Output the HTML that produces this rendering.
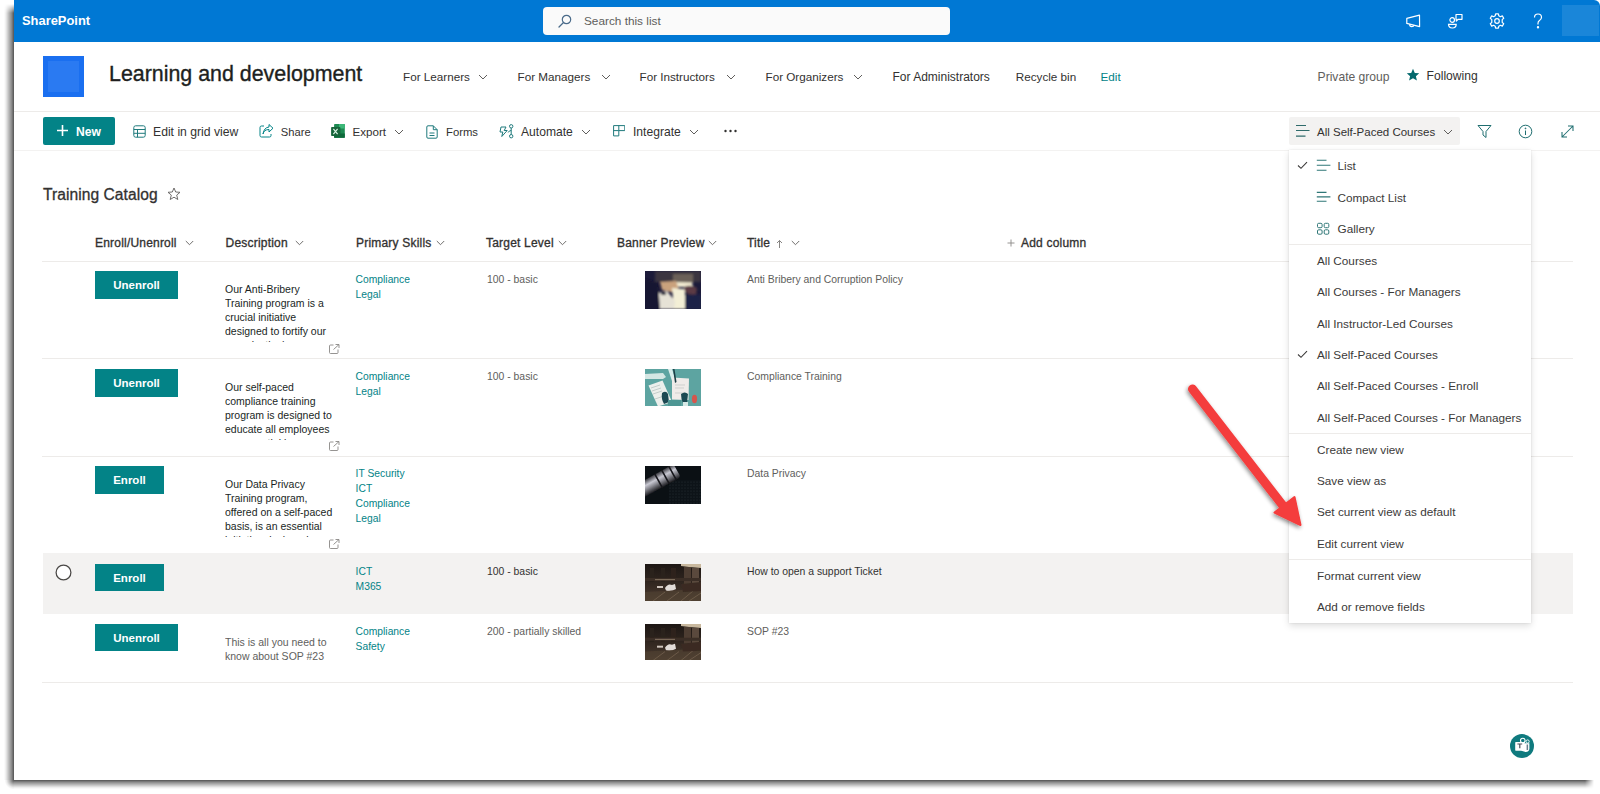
<!DOCTYPE html>
<html><head><meta charset="utf-8">
<style>
*{box-sizing:border-box;margin:0;padding:0}
html,body{width:1600px;height:794px;overflow:hidden;background:#fff;font-family:"Liberation Sans",sans-serif;color:#323130}
#page{position:absolute;left:14px;top:0;width:1586px;height:780px;background:#fff;box-shadow:none}
.a{position:absolute}
.t{position:absolute;white-space:nowrap}
#suite{position:absolute;left:14px;top:0;width:1586px;height:41.5px;background:#0078d4;border-top-right-radius:6px}
.hl{position:absolute;height:1px;background:#edebe9}
.btn{position:absolute;background:#038387;color:#fff;font-weight:700;font-size:11.5px;line-height:28px;text-align:center}
.cell{font-size:10.4px;color:#605e5c}
.sk{font-size:10.3px;color:#038387;line-height:15px}
.desc{font-size:10.5px;color:#201f1e;line-height:14px;white-space:normal;overflow:hidden}
.hd{font-size:12px;font-weight:400;color:#323130;line-height:16px;letter-spacing:0.2px;-webkit-text-stroke:0.32px #323130}
.nav{font-size:11.7px;color:#323130;line-height:16px}
.cmd{font-size:11.8px;color:#323130;line-height:16px}
.mi{font-size:11.75px;color:#3b3a39;line-height:16px}
.thumb1{background:radial-gradient(ellipse at 55% 40%,#f5ecd8 0,#c9b99a 18%,#2c2f45 45%,#15182a 100%)}
.thumb2{background:#5aa3a0}
.thumb3{background:radial-gradient(ellipse at 30% 35%,#9a9a9a 0,#555 20%,#1d2226 45%,#0c1114 100%)}
.thumb4{background:linear-gradient(180deg,#3a2c22 0,#2a2019 50%,#4a3a2c 100%)}
</style></head><body>
<div id="page"></div>
<div class="a" style="left:4px;top:4px;width:10px;height:776px;background:linear-gradient(to right,rgba(0,0,0,0) 0%,rgba(0,0,0,0.08) 20%,rgba(0,0,0,0.25) 45%,rgba(0,0,0,0.45) 75%,rgba(0,0,0,0.68) 100%);-webkit-mask-image:linear-gradient(to bottom,transparent 0,#000 9px)"></div>
<div class="a" style="left:14px;top:780px;width:1580px;height:9px;background:linear-gradient(to bottom,rgba(0,0,0,0.68) 0%,rgba(0,0,0,0.45) 25%,rgba(0,0,0,0.25) 55%,rgba(0,0,0,0.08) 80%,rgba(0,0,0,0) 100%);-webkit-mask-image:linear-gradient(to left,transparent 0,#000 9px)"></div>
<div class="a" style="left:4px;top:780px;width:10px;height:9px;background:radial-gradient(circle at 100% 0,rgba(0,0,0,0.68) 0,rgba(0,0,0,0.45) 2.5px,rgba(0,0,0,0.25) 5px,rgba(0,0,0,0.08) 7.5px,rgba(0,0,0,0) 9.5px)"></div>

<div id="suite"></div>
<div class="t" style="left:22px;top:13px;font-size:12.9px;font-weight:700;color:#fff;line-height:16px">SharePoint</div>
<div class="a" style="left:543px;top:7px;width:407px;height:28px;background:#fafafa;border-radius:4px"></div>
<svg class="a" style="left:557px;top:13px" width="16" height="16" viewBox="0 0 16 16"><circle cx="9.5" cy="6.5" r="4.2" fill="none" stroke="#4a6b8a" stroke-width="1.2"/><path d="M6.5 9.5 L2 14" stroke="#4a6b8a" stroke-width="1.3" stroke-linecap="round"/></svg>
<div class="t" style="left:584px;top:13px;font-size:11.8px;color:#605e5c;line-height:16px">Search this list</div>
<svg class="a" style="left:1404px;top:12px" width="18" height="18" viewBox="0 0 18 18" fill="none" stroke="#fff" stroke-width="1.2"><path d="M2.8 6.4 L15.5 3.2 L15.6 14.6 L2.8 11.4 Z" stroke-linejoin="round"/><path d="M5.6 12.2 Q5.6 14.6 7.8 14.6 Q9.6 14.6 10.2 13.3"/></svg>
<svg class="a" style="left:1446px;top:12px" width="18" height="18" viewBox="0 0 18 18" fill="none" stroke="#fff" stroke-width="1.2"><circle cx="6.2" cy="8" r="2.3"/><path d="M2.5 12.3 H10.2 Q10.2 16 6.35 16 Q2.5 16 2.5 12.3Z"/><path d="M10 2.5 H16 V7.3 H12.2 L10.3 9 V7.3 H10 Z" stroke-linejoin="round"/></svg>
<svg class="a" style="left:1488px;top:12px" width="18" height="18" viewBox="0 0 18 18" fill="none" stroke="#fff" stroke-width="1.2"><circle cx="9" cy="9" r="2.3"/><path d="M7.6 1.8 L10.4 1.8 L10.8 3.8 L12.4 4.7 L14.3 3.9 L15.7 6.3 L14.2 7.6 L14.2 10.4 L15.7 11.7 L14.3 14.1 L12.4 13.3 L10.8 14.2 L10.4 16.2 L7.6 16.2 L7.2 14.2 L5.6 13.3 L3.7 14.1 L2.3 11.7 L3.8 10.4 L3.8 7.6 L2.3 6.3 L3.7 3.9 L5.6 4.7 L7.2 3.8 Z" stroke-linejoin="round"/></svg>
<svg class="a" style="left:1530px;top:12px" width="16" height="18" viewBox="0 0 16 18" fill="none" stroke="#fff" stroke-width="1.2"><path d="M4.5 5.5 Q4.5 2 8 2 Q11.5 2 11.5 5.2 Q11.5 7.2 9.5 8.4 Q8 9.3 8 11.2 L8 12.5"/><circle cx="8" cy="15.3" r="0.6" fill="#fff"/></svg>
<div class="a" style="left:1562px;top:5px;width:36.5px;height:31px;background:#1a86d9"></div>


<div class="a" style="left:43px;top:56px;width:41px;height:41px;background:#1a6ff0"></div>
<div class="a" style="left:48px;top:61px;width:31px;height:31px;background:#2a7af2"></div>
<div class="t" style="left:109px;top:62px;font-size:21.4px;color:#201f1e;line-height:24px;-webkit-text-stroke:0.35px #201f1e">Learning and development</div>
<div class="t nav" style="left:403px;top:69px">For Learners</div><svg class="a" style="left:478px;top:74px" width="10" height="6" viewBox="0 0 10 6"><path d="M1 1 L5 5 L9 1" fill="none" stroke="#605e5c" stroke-width="1"/></svg>
<div class="t nav" style="left:517.5px;top:69px">For Managers</div><svg class="a" style="left:601px;top:74px" width="10" height="6" viewBox="0 0 10 6"><path d="M1 1 L5 5 L9 1" fill="none" stroke="#605e5c" stroke-width="1"/></svg>
<div class="t nav" style="left:639.5px;top:69px">For Instructors</div><svg class="a" style="left:726px;top:74px" width="10" height="6" viewBox="0 0 10 6"><path d="M1 1 L5 5 L9 1" fill="none" stroke="#605e5c" stroke-width="1"/></svg>
<div class="t nav" style="left:765.5px;top:69px">For Organizers</div><svg class="a" style="left:853px;top:74px" width="10" height="6" viewBox="0 0 10 6"><path d="M1 1 L5 5 L9 1" fill="none" stroke="#605e5c" stroke-width="1"/></svg>
<div class="t nav" style="left:892.5px;top:69px;font-size:12px">For Administrators</div>
<div class="t nav" style="left:1015.75px;top:69px">Recycle bin</div>
<div class="t nav" style="left:1100.5px;top:69px;color:#038387">Edit</div>
<div class="t nav" style="left:1317.6px;top:69px;color:#605e5c;font-size:12.1px">Private group</div>
<svg class="a" style="left:1406px;top:68px" width="14" height="14" viewBox="0 0 14 14"><path d="M7 0.8 L8.8 4.9 L13.2 5.3 L9.9 8.2 L10.9 12.6 L7 10.3 L3.1 12.6 L4.1 8.2 L0.8 5.3 L5.2 4.9 Z" fill="#03686c"/></svg>
<div class="t nav" style="left:1426.6px;top:68px;font-size:12.1px">Following</div>
<div class="hl" style="left:14px;top:111px;width:1586px"></div>
<div class="hl" style="left:14px;top:150px;width:1586px;background:#f3f2f1"></div>

<div class="a" style="left:42.5px;top:117px;width:72.5px;height:27.5px;background:#038387;border-radius:2px"></div>
<svg class="a" style="left:56px;top:124px" width="13" height="13" viewBox="0 0 13 13"><path d="M6.5 1 V12 M1 6.5 H12" stroke="#fff" stroke-width="1.6"/></svg>
<div class="t" style="left:76px;top:123.5px;font-size:12.1px;font-weight:700;color:#fff;line-height:16px">New</div>
<svg class="a" style="left:132.5px;top:124.5px" width="13" height="13" viewBox="0 0 13 13" fill="none" stroke="#1f7a7c" stroke-width="1"><rect x="0.8" y="0.8" width="11.4" height="11.4" rx="1.8"/><path d="M0.8 4.5 H12.2 M0.8 8.3 H12.2 M4.5 4.5 V12.2"/></svg>
<div class="t cmd" style="left:153px;top:123.75px;font-size:12.2px">Edit in grid view</div>
<svg class="a" style="left:259px;top:124px" width="15" height="14" viewBox="0 0 15 14" fill="none" stroke="#038387" stroke-width="1"><path d="M5 2 H2.5 Q1 2 1 3.5 V11.5 Q1 13 2.5 13 H10.5 Q12 13 12 11.5 V10"/><path d="M4 10 Q5 5.5 10 5.5 V8 L14 4.2 L10 0.5 V3 Q5 3.5 4 10Z"/></svg>
<div class="t cmd" style="left:280.75px;top:123.75px;font-size:11.2px">Share</div>
<svg class="a" style="left:330px;top:123px" width="16" height="16" viewBox="0 0 16 16"><rect x="4.1" y="1" width="10.7" height="13.8" rx="0.8" fill="#1d8a52"/><rect x="9" y="1" width="5.8" height="4.5" fill="#3cb878"/><rect x="4.1" y="10.5" width="10.7" height="4.3" fill="#0e6a3b"/><rect x="1.1" y="4" width="9.3" height="9" rx="0.8" fill="#17653b"/><path d="M3.4 5.8 L7.6 11.2 M7.6 5.8 L3.4 11.2" stroke="#d9f2e3" stroke-width="1.15"/></svg>
<div class="t cmd" style="left:352.5px;top:123.75px;font-size:11.6px">Export</div><svg class="a" style="left:394px;top:129px" width="10" height="6" viewBox="0 0 10 6"><path d="M1 1 L5 5 L9 1" fill="none" stroke="#605e5c" stroke-width="1"/></svg>
<svg class="a" style="left:425.5px;top:124.5px" width="12" height="14" viewBox="0 0 12 14" fill="none" stroke="#1f7a7c" stroke-width="1"><path d="M2 0.8 H7.3 L11.2 4.7 V12 Q11.2 13.2 10 13.2 H2 Q0.8 13.2 0.8 12 V2 Q0.8 0.8 2 0.8Z"/><path d="M7.3 0.8 V4.7 H11.2"/><path d="M3.5 8 H8.5 M3.5 10.5 H8.5"/></svg>
<div class="t cmd" style="left:446px;top:123.75px;font-size:11.3px">Forms</div>
<svg class="a" style="left:499px;top:124px" width="16" height="15" viewBox="0 0 16 15" fill="none" stroke="#1f7a7c" stroke-width="1"><path d="M7 3 L2 3 L1 8 L3.8 8 L2.8 12.5 L8.2 6.5 L5.2 6.5 Z" stroke-linejoin="round"/><circle cx="12.2" cy="2.3" r="1.7"/><circle cx="12.2" cy="12.2" r="1.7"/><path d="M12.2 4 V10.5 M12.2 6.5 Q10 6.5 9.2 8.5"/></svg>
<div class="t cmd" style="left:521px;top:123.75px;font-size:12.1px">Automate</div><svg class="a" style="left:581px;top:129px" width="10" height="6" viewBox="0 0 10 6"><path d="M1 1 L5 5 L9 1" fill="none" stroke="#605e5c" stroke-width="1"/></svg>
<svg class="a" style="left:612.5px;top:125px" width="12.5" height="11.5" viewBox="0 0 12.5 11.5" fill="none" stroke="#1f7a7c" stroke-width="1"><path d="M0.6 0.6 H11.8 V5.6 H5.8 V10.9 H0.6 Z"/><path d="M5.8 0.6 V5.6 M0.6 5.6 H5.8"/></svg>
<div class="t cmd" style="left:633px;top:123.75px;font-size:12.1px">Integrate</div><svg class="a" style="left:689px;top:129px" width="10" height="6" viewBox="0 0 10 6"><path d="M1 1 L5 5 L9 1" fill="none" stroke="#605e5c" stroke-width="1"/></svg>
<svg class="a" style="left:724px;top:129px" width="13" height="4" viewBox="0 0 13 4"><circle cx="1.5" cy="2" r="1.2" fill="#323130"/><circle cx="6.5" cy="2" r="1.2" fill="#323130"/><circle cx="11.5" cy="2" r="1.2" fill="#323130"/></svg>
<div class="a" style="left:1289px;top:117px;width:171px;height:27.5px;background:#f3f2f1;border-radius:2px"></div>
<svg class="a" style="left:1295px;top:124px" width="16" height="14" viewBox="0 0 16 14"><path d="M1 1.5 H11 M1 6.5 H14.5 M1 12.2 H10.5" stroke="#2f6b6b" stroke-width="1.2"/></svg>
<div class="t cmd" style="left:1317px;top:123.75px;font-size:11.5px">All Self-Paced Courses</div><svg class="a" style="left:1443px;top:129px" width="10" height="6" viewBox="0 0 10 6"><path d="M1 1 L5 5 L9 1" fill="none" stroke="#605e5c" stroke-width="1"/></svg>
<svg class="a" style="left:1477px;top:124px" width="15" height="15" viewBox="0 0 15 15" fill="none" stroke="#1f6e70" stroke-width="1"><path d="M1 1.5 H14 L9 7.5 V13.5 L6 11 V7.5 Z" stroke-linejoin="round"/></svg>
<svg class="a" style="left:1518px;top:124px" width="15" height="15" viewBox="0 0 15 15" fill="none" stroke="#1f6e70" stroke-width="1"><circle cx="7.5" cy="7.5" r="6.3"/><path d="M7.5 6.5 V11"/><circle cx="7.5" cy="4.4" r="0.45" fill="#1f6e70"/></svg>
<svg class="a" style="left:1560px;top:124px" width="15" height="15" viewBox="0 0 15 15" fill="none" stroke="#1f6e70" stroke-width="1.05"><path d="M2 13 L13 2 M8 2 H13 V7 M2 8 V13 H7"/></svg>

<div class="t" style="left:43px;top:185px;font-size:15.6px;color:#323130;line-height:19px;letter-spacing:0.05px;-webkit-text-stroke:0.3px #323130">Training Catalog</div>
<svg class="a" style="left:167px;top:187px" width="14" height="14" viewBox="0 0 14 14"><path d="M7 1 L8.7 5 L13 5.3 L9.7 8.1 L10.8 12.5 L7 10.2 L3.2 12.5 L4.3 8.1 L1 5.3 L5.3 5 Z" fill="none" stroke="#605e5c" stroke-width="0.9" stroke-linejoin="round"/></svg>
<div class="t hd" style="left:95px;top:235px">Enroll/Unenroll</div><svg class="a" style="left:185px;top:240px" width="9" height="6" viewBox="0 0 9 6"><path d="M0.8 1 L4.5 4.7 L8.2 1" fill="none" stroke="#605e5c" stroke-width="0.9"/></svg>
<div class="t hd" style="left:225.6px;top:235px">Description</div><svg class="a" style="left:295px;top:240px" width="9" height="6" viewBox="0 0 9 6"><path d="M0.8 1 L4.5 4.7 L8.2 1" fill="none" stroke="#605e5c" stroke-width="0.9"/></svg>
<div class="t hd" style="left:356px;top:235px">Primary Skills</div><svg class="a" style="left:436px;top:240px" width="9" height="6" viewBox="0 0 9 6"><path d="M0.8 1 L4.5 4.7 L8.2 1" fill="none" stroke="#605e5c" stroke-width="0.9"/></svg>
<div class="t hd" style="left:486px;top:235px">Target Level</div><svg class="a" style="left:558px;top:240px" width="9" height="6" viewBox="0 0 9 6"><path d="M0.8 1 L4.5 4.7 L8.2 1" fill="none" stroke="#605e5c" stroke-width="0.9"/></svg>
<div class="t hd" style="left:617px;top:235px">Banner Preview</div><svg class="a" style="left:708px;top:240px" width="9" height="6" viewBox="0 0 9 6"><path d="M0.8 1 L4.5 4.7 L8.2 1" fill="none" stroke="#605e5c" stroke-width="0.9"/></svg>
<div class="t hd" style="left:747px;top:235px">Title</div>
<svg class="a" style="left:775.8px;top:239px" width="7" height="10" viewBox="0 0 7 10"><path d="M3.5 9 V1.5 M1 4 L3.5 1.5 L6 4" fill="none" stroke="#797775" stroke-width="0.9"/></svg><svg class="a" style="left:791px;top:240px" width="9" height="6" viewBox="0 0 9 6"><path d="M0.8 1 L4.5 4.7 L8.2 1" fill="none" stroke="#605e5c" stroke-width="0.9"/></svg>
<svg class="a" style="left:1007px;top:239px" width="8" height="8" viewBox="0 0 8 8"><path d="M4 0.5 V7.5 M0.5 4 H7.5" stroke="#8a8886" stroke-width="0.9"/></svg>
<div class="t hd" style="left:1021px;top:235px">Add column</div>
<div class="hl" style="left:42px;top:261px;width:1531px"></div>
<div class="hl" style="left:42px;top:358px;width:1531px"></div>
<div class="hl" style="left:42px;top:456px;width:1531px"></div>
<div class="a" style="left:43px;top:553px;width:1530px;height:61px;background:#f3f2f1"></div>
<div class="hl" style="left:42px;top:682px;width:1531px"></div>

<div class="btn" style="left:95px;top:271px;width:83px;height:28px">Unenroll</div>
<div class="t desc" style="left:225px;top:282px;width:112px;height:60px">Our Anti-Bribery<br>Training program is a<br>crucial initiative<br>designed to fortify our<br>organization's</div>
<svg class="a" style="left:329px;top:344px" width="11" height="10" viewBox="0 0 11 10" fill="none" stroke="#8a8886" stroke-width="0.9"><path d="M4.5 1 H1.5 Q0.5 1 0.5 2 V8.5 Q0.5 9.5 1.5 9.5 H8 Q9 9.5 9 8.5 V5.5"/><path d="M4.5 5.5 L10 0.5 M6.5 0.5 H10 V4"/></svg>
<div class="t sk" style="left:355.6px;top:271.5px">Compliance<br>Legal</div>
<div class="t cell" style="left:487px;top:271.5px;line-height:15px">100 - basic</div>
<svg class="a" style="left:645px;top:271px" width="56" height="38" viewBox="0 0 56 38"><defs><filter id="b1" x="-10%" y="-10%" width="120%" height="120%"><feGaussianBlur stdDeviation="1.1"/></filter><clipPath id="c1"><rect width="56" height="38"/></clipPath></defs><g clip-path="url(#c1)"><rect width="56" height="38" fill="#1c1b3a"/><g filter="url(#b1)"><rect x="10" y="0" width="46" height="11" fill="#3b3640"/><rect x="28" y="3" width="20" height="9" fill="#6a6058"/><path d="M27 11 L47 11.5 L48 16 L28 16 Z" fill="#f1ead0"/><path d="M15 11 L31 10 L34 19 L30 22 L17 19 Z" fill="#caa27d"/><path d="M27 17 L40 18 L40 38 L29 38 Z" fill="#f3efd6"/><path d="M13 22 L22 20 L30 30 L29 38 L14 38 Z" fill="#e6e2d6"/><path d="M39 16 Q46 13 52 17 L51 24 Q45 25 40 21 Z" fill="#5b3a44"/><path d="M40 24 L56 23 V38 H40 Z" fill="#1e2046"/><path d="M0 8 L13 12 L15 38 H0 Z" fill="#141330"/><rect x="16" y="21" width="5" height="3" fill="#23223a"/></g></g></svg>
<div class="t cell" style="left:747px;top:271.5px;line-height:15px">Anti Bribery and Corruption Policy</div>

<div class="btn" style="left:95px;top:369px;width:83px;height:28px">Unenroll</div>
<div class="t desc" style="left:225px;top:379.5px;width:112px;height:60px">Our self-paced<br>compliance training<br>program is designed to<br>educate all employees<br>on essential laws</div>
<svg class="a" style="left:329px;top:441px" width="11" height="10" viewBox="0 0 11 10" fill="none" stroke="#8a8886" stroke-width="0.9"><path d="M4.5 1 H1.5 Q0.5 1 0.5 2 V8.5 Q0.5 9.5 1.5 9.5 H8 Q9 9.5 9 8.5 V5.5"/><path d="M4.5 5.5 L10 0.5 M6.5 0.5 H10 V4"/></svg>
<div class="t sk" style="left:355.6px;top:369px">Compliance<br>Legal</div>
<div class="t cell" style="left:487px;top:369px;line-height:15px">100 - basic</div>
<svg class="a" style="left:645px;top:369px" width="56" height="37" viewBox="0 0 56 37"><defs><filter id="b2"><feGaussianBlur stdDeviation="0.45"/></filter></defs><rect width="56" height="37" fill="#5da4a1"/><g filter="url(#b2)"><path d="M0 5 L18 4 L21 8 L18 10 L0 10 Z" fill="#d4e6e3"/><path d="M3.5 16.5 L17.5 11.5 L27 33 L13 37.5 Z" fill="#ecefec"/><path d="M6 19 L15 16 M7 22 L16 19 M8 25 L17 22 M10 30 L19 27" stroke="#b9c4c2" stroke-width="0.8"/><path d="M23 0 L27 0 L31 12 L27 12 Z" fill="#d8ecea"/><path d="M27 8.5 L44 9.5 L43.5 31 L27 30.5 Z" fill="#efebe9"/><path d="M30 16 H40 M30 19 H39 M30 24 H40" stroke="#c2c4c4" stroke-width="0.7"/><path d="M28 0 L29.5 0 L31.5 13 L30 14 Z" fill="#1d3e44"/><path d="M17 24 Q21 21 23 25 L24 33 L19 35 Q16 30 17 24 Z" fill="#1f4a52"/><path d="M36 25 Q40 22 43 25 L42 34 L38 34 Q36 30 36 25 Z" fill="#1f4a52"/><ellipse cx="49.5" cy="30" rx="2.6" ry="4.2" fill="#d4574e"/><rect x="23" y="31" width="13" height="6" fill="#4e9693"/><rect x="38" y="33" width="5" height="4" fill="#d7e9e6"/></g></svg>
<div class="t cell" style="left:747px;top:369px;line-height:15px">Compliance Training</div>

<div class="btn" style="left:95px;top:466px;width:69px;height:28px">Enroll</div>
<div class="t desc" style="left:225px;top:477px;width:112px;height:60px">Our Data Privacy<br>Training program,<br>offered on a self-paced<br>basis, is an essential<br>initiative designed</div>
<svg class="a" style="left:329px;top:539px" width="11" height="10" viewBox="0 0 11 10" fill="none" stroke="#8a8886" stroke-width="0.9"><path d="M4.5 1 H1.5 Q0.5 1 0.5 2 V8.5 Q0.5 9.5 1.5 9.5 H8 Q9 9.5 9 8.5 V5.5"/><path d="M4.5 5.5 L10 0.5 M6.5 0.5 H10 V4"/></svg>
<div class="t sk" style="left:355.6px;top:466px">IT Security<br>ICT<br>Compliance<br>Legal</div>
<svg class="a" style="left:645px;top:466px" width="56" height="38" viewBox="0 0 56 38"><defs><filter id="b3"><feGaussianBlur stdDeviation="0.6"/></filter><linearGradient id="g3" x1="0" y1="0" x2="0" y2="1"><stop offset="0" stop-color="#3a3a40"/><stop offset="0.35" stop-color="#c8c8d2"/><stop offset="0.6" stop-color="#8a8a92"/><stop offset="1" stop-color="#1a1a1e"/></linearGradient><clipPath id="c3"><rect width="56" height="38"/></clipPath><pattern id="p3" width="3" height="3" patternUnits="userSpaceOnUse"><rect width="3" height="3" fill="#0d1318"/><circle cx="1" cy="1" r="0.6" fill="#2a3238"/></pattern></defs><g clip-path="url(#c3)"><rect width="56" height="38" fill="#0b1014"/><rect x="24" y="14" width="32" height="24" fill="url(#p3)" opacity="0.9"/><g filter="url(#b3)"><g transform="rotate(-29 0 23)"><rect x="-12" y="15" width="49" height="15" rx="3" fill="url(#g3)"/><rect x="15" y="14.5" width="1.6" height="16" fill="#15151a"/><rect x="23" y="14.5" width="1.6" height="16" fill="#15151a"/><rect x="31" y="14.5" width="1.6" height="16" fill="#15151a"/></g></g></g></svg>
<div class="t cell" style="left:747px;top:466px;line-height:15px">Data Privacy</div>

<svg class="a" style="left:55px;top:564px" width="17" height="17" viewBox="0 0 17 17"><circle cx="8.5" cy="8.5" r="7.4" fill="#fff" stroke="#4a4846" stroke-width="1.25"/></svg>
<div class="btn" style="left:95px;top:564px;width:69px;height:27px">Enroll</div>
<div class="t sk" style="left:355.6px;top:564px">ICT<br>M365</div>
<div class="t cell" style="left:487px;top:564px;line-height:15px;color:#323130">100 - basic</div>
<svg class="a" style="left:645px;top:563.5px" width="56" height="37" viewBox="0 0 56 37" preserveAspectRatio="none"><defs><filter id="b4563"><feGaussianBlur stdDeviation="0.7"/></filter><clipPath id="c4563"><rect width="56" height="37"/></clipPath><linearGradient id="g4563" x1="0" y1="0" x2="0" y2="1"><stop offset="0" stop-color="#1d1714"/><stop offset="0.45" stop-color="#2e241e"/><stop offset="0.75" stop-color="#3e3128"/><stop offset="1" stop-color="#5a4838"/></linearGradient></defs><g clip-path="url(#c4563)"><rect width="56" height="37" fill="url(#g4563)"/><g filter="url(#b4563)"><path d="M36 0 H56 V4 L44 3 L36 2 Z" fill="#c8b89e"/><rect x="39" y="3" width="7" height="17" fill="#4e3e32"/><rect x="47" y="4" width="7" height="16" fill="#5a4a3c"/><rect x="5" y="4" width="4" height="14" fill="#2a211c"/><rect x="16" y="4" width="4" height="14" fill="#2c231d"/><rect x="26" y="4" width="5" height="14" fill="#2e241e"/><path d="M0 14 H56 V17 H0 Z" fill="#3a2e26"/><rect x="10" y="15" width="20" height="1.2" fill="#7a6a58"/><path d="M20 24 Q23 19 27 21 L30 20 L31 25 Q26 28 21 26.5 Z" fill="#e2dcd8"/><rect x="12" y="22" width="6" height="2" fill="#cfc5bd"/><path d="M0 28 L56 25 V37 H0 Z" fill="#4d3d2f" opacity="0.8"/><path d="M8 37 L20 28 M22 37 L34 28 M36 37 L48 27 M44 37 L56 29" stroke="#6b5a48" stroke-width="1"/><path d="M36 20 L56 18 V27 L38 28 Z" fill="#3a2c23"/></g></g></svg>
<div class="t cell" style="left:747px;top:564px;line-height:15px;color:#323130">How to open a support Ticket</div>

<div class="btn" style="left:95px;top:624px;width:83px;height:27px">Unenroll</div>
<div class="t desc" style="left:225px;top:634.5px;width:120px;height:30px;color:#605e5c">This is all you need to<br>know about SOP #23</div>
<div class="t sk" style="left:355.6px;top:624px">Compliance<br>Safety</div>
<div class="t cell" style="left:487px;top:624px;line-height:15px">200 - partially skilled</div>
<svg class="a" style="left:645px;top:623.5px" width="56" height="36.5" viewBox="0 0 56 37" preserveAspectRatio="none"><defs><filter id="b4623"><feGaussianBlur stdDeviation="0.7"/></filter><clipPath id="c4623"><rect width="56" height="37"/></clipPath><linearGradient id="g4623" x1="0" y1="0" x2="0" y2="1"><stop offset="0" stop-color="#1d1714"/><stop offset="0.45" stop-color="#2e241e"/><stop offset="0.75" stop-color="#3e3128"/><stop offset="1" stop-color="#5a4838"/></linearGradient></defs><g clip-path="url(#c4623)"><rect width="56" height="37" fill="url(#g4623)"/><g filter="url(#b4623)"><path d="M36 0 H56 V4 L44 3 L36 2 Z" fill="#c8b89e"/><rect x="39" y="3" width="7" height="17" fill="#4e3e32"/><rect x="47" y="4" width="7" height="16" fill="#5a4a3c"/><rect x="5" y="4" width="4" height="14" fill="#2a211c"/><rect x="16" y="4" width="4" height="14" fill="#2c231d"/><rect x="26" y="4" width="5" height="14" fill="#2e241e"/><path d="M0 14 H56 V17 H0 Z" fill="#3a2e26"/><rect x="10" y="15" width="20" height="1.2" fill="#7a6a58"/><path d="M20 24 Q23 19 27 21 L30 20 L31 25 Q26 28 21 26.5 Z" fill="#e2dcd8"/><rect x="12" y="22" width="6" height="2" fill="#cfc5bd"/><path d="M0 28 L56 25 V37 H0 Z" fill="#4d3d2f" opacity="0.8"/><path d="M8 37 L20 28 M22 37 L34 28 M36 37 L48 27 M44 37 L56 29" stroke="#6b5a48" stroke-width="1"/><path d="M36 20 L56 18 V27 L38 28 Z" fill="#3a2c23"/></g></g></svg>
<div class="t cell" style="left:747px;top:624px;line-height:15px">SOP #23</div>

<div class="a" style="left:1289px;top:150px;width:242px;height:473px;background:#fff;box-shadow:0 3px 7px rgba(0,0,0,0.13),0 0 2px rgba(0,0,0,0.1)"></div>
<svg class="a" style="left:1297px;top:161px" width="11" height="9" viewBox="0 0 11 9"><path d="M1 4.5 L4 7.3 L10 1.2" fill="none" stroke="#3b3a39" stroke-width="1.1"/></svg><svg class="a" style="left:1297px;top:350px" width="11" height="9" viewBox="0 0 11 9"><path d="M1 4.5 L4 7.3 L10 1.2" fill="none" stroke="#3b3a39" stroke-width="1.1"/></svg><svg class="a" style="left:1316px;top:158px" width="16" height="14" viewBox="0 0 16 14"><path d="M0.8 2.3 H10.5 M0.8 7.3 H14.4 M0.8 12.3 H10.5" stroke="#2f7777" stroke-width="1.1"/></svg><div class="t mi" style="left:1337.5px;top:158px">List</div><svg class="a" style="left:1316px;top:190px" width="16" height="14" viewBox="0 0 16 14"><path d="M0.8 2.4 H10.5 M0.8 6.9 H14.4 M0.8 11.3 H10.5" stroke="#2f7777" stroke-width="1.1"/></svg><div class="t mi" style="left:1337.5px;top:189.7px">Compact List</div><svg class="a" style="left:1316px;top:222px" width="15" height="14" viewBox="0 0 15 14" fill="none" stroke="#2f7777" stroke-width="1"><rect x="1.5" y="1.3" width="4.6" height="4.4" rx="1.2"/><rect x="8.2" y="1.3" width="4.6" height="4.4" rx="1.2"/><rect x="1.5" y="7.8" width="4.6" height="4.4" rx="1.2"/><rect x="8.2" y="7.8" width="4.6" height="4.4" rx="1.2"/></svg><div class="t mi" style="left:1337.5px;top:221.4px">Gallery</div><div class="t mi" style="left:1317px;top:252.5px">All Courses</div><div class="t mi" style="left:1317px;top:284px">All Courses - For Managers</div><div class="t mi" style="left:1317px;top:315.5px">All Instructor-Led Courses</div><div class="t mi" style="left:1317px;top:347px">All Self-Paced Courses</div><div class="t mi" style="left:1317px;top:378.4px">All Self-Paced Courses - Enroll</div><div class="t mi" style="left:1317px;top:409.5px">All Self-Paced Courses - For Managers</div><div class="t mi" style="left:1317px;top:441.6px">Create new view</div><div class="t mi" style="left:1317px;top:473px">Save view as</div><div class="t mi" style="left:1317px;top:504.4px">Set current view as default</div><div class="t mi" style="left:1317px;top:535.5px">Edit current view</div><div class="t mi" style="left:1317px;top:567.6px">Format current view</div><div class="t mi" style="left:1317px;top:598.5px">Add or remove fields</div><div class="hl" style="left:1289px;top:244px;width:242px"></div><div class="hl" style="left:1289px;top:433px;width:242px"></div><div class="hl" style="left:1289px;top:559px;width:242px"></div>
<svg class="a" style="left:1160px;top:360px;overflow:visible" width="160" height="190" viewBox="0 0 160 190">
<defs><filter id="sh" x="-30%" y="-30%" width="160%" height="160%"><feGaussianBlur in="SourceAlpha" stdDeviation="2"/><feOffset dx="-1" dy="2"/><feComponentTransfer><feFuncA type="linear" slope="0.45"/></feComponentTransfer><feMerge><feMergeNode/><feMergeNode in="SourceGraphic"/></feMerge></filter></defs>
<g filter="url(#sh)">
<path d="M32.5 29 L124 147" stroke="#f43d3d" stroke-width="9" stroke-linecap="round"/>
<path d="M140.5 165 L114.5 152.5 L134.5 137 Z" fill="#f43d3d" stroke="#f43d3d" stroke-width="2" stroke-linejoin="round"/>
</g></svg>

<svg class="a" style="left:1508.8px;top:733px" width="26" height="26" viewBox="0 0 26 26"><circle cx="13" cy="13" r="12" fill="#0f7a7e"/>
<path d="M11.2 10.3 H20.4 V15.3 Q20.4 19.1 16.6 19.1 Q13.2 19.1 11.2 16.3 Z" fill="#fff"/>
<circle cx="13.8" cy="7.6" r="2.3" fill="#0f7a7e" stroke="#fff" stroke-width="1.1"/>
<circle cx="18.6" cy="8.5" r="1.6" fill="#0f7a7e" stroke="#fff" stroke-width="0.9"/>
<rect x="17.6" y="11.5" width="1.5" height="5.5" fill="#6a7d8c"/>
<rect x="6.2" y="9.1" width="9.2" height="8.6" rx="0.6" fill="#fff"/>
<path d="M8.4 11 H13.2 M10.8 11 V15.3" stroke="#4d4f5a" stroke-width="1.2"/>
</svg>
</body></html>
